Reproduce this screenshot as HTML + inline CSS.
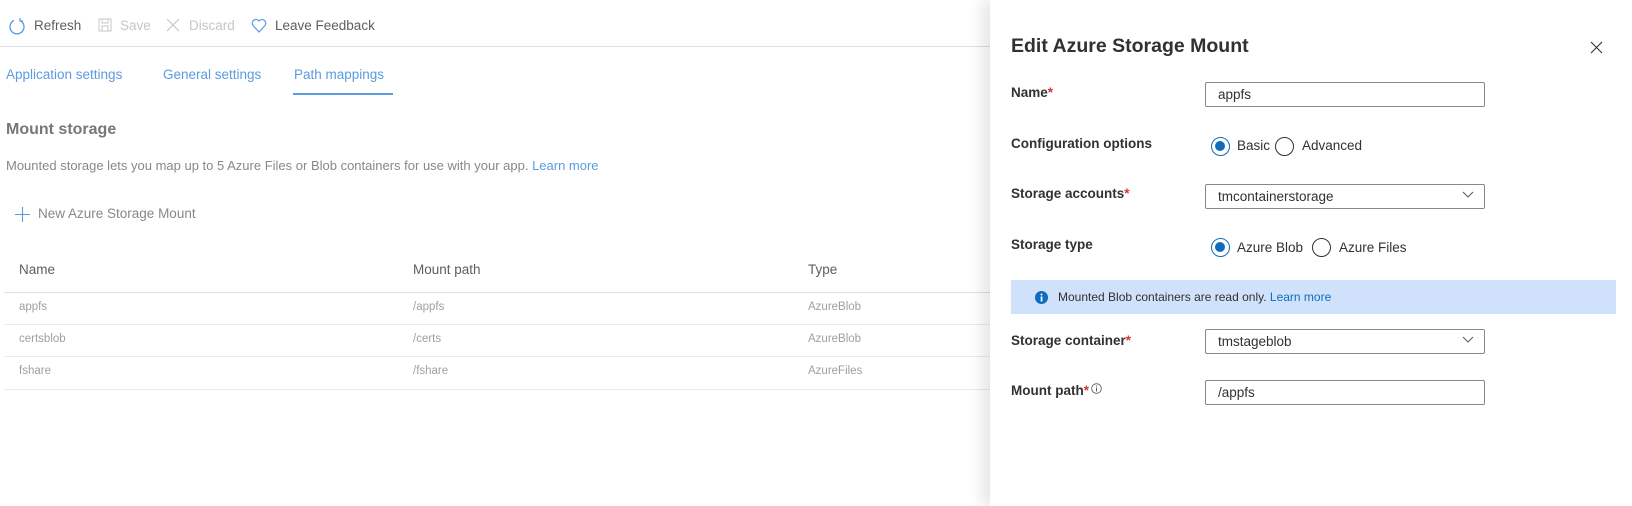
<!DOCTYPE html>
<html><head><meta charset="utf-8"><style>
*{box-sizing:border-box;margin:0;padding:0}
body{width:1632px;height:506px;overflow:hidden;background:#fff;font-family:"Liberation Sans",sans-serif;position:relative;color:#323130}
.a{position:absolute;white-space:nowrap}
.tab{font-size:13.5px;color:#5b9be0;top:67px}
.hr{position:absolute;height:1px;background:#edebe9}
.row{font-size:11.5px;color:#a19f9d}
.panel{position:absolute;left:990px;top:0;width:642px;height:506px;background:#fff;box-shadow:-8px 0 14px rgba(0,0,0,.10)}
.lbl{font-size:13.5px;font-weight:bold;color:#323130;left:21px}
.req{color:#d13438}
.inp{position:absolute;left:215px;width:280px;height:25px;border:1px solid #8a8886;border-radius:2px;font-size:13.5px;padding:4px 0 0 12px;color:#323130}
.chev{position:absolute;right:10px;top:6px}
.rad{position:absolute;width:19px;height:19px;border-radius:50%;border:1.5px solid #323130}
.rad.on{border-color:#0f6cbd}
.rad.on::after{content:"";position:absolute;left:3px;top:3px;width:10px;height:10px;border-radius:50%;background:#0f6cbd}
.rt{font-size:13.5px;color:#323130}
</style></head><body>
<svg class="a" style="left:9px;top:17px" width="16" height="18" viewBox="0 0 16 18"><path d="M5 3.5A7 7 0 1 0 11 3.5" fill="none" stroke="#5b9be0" stroke-width="1.3"/><path d="M11 1v3h3" fill="none" stroke="#5b9be0" stroke-width="1.2"/></svg>
<div class="a" style="left:34px;top:18px;font-size:13.5px;color:#605e5c">Refresh</div>
<svg class="a" style="left:98px;top:18px" width="14" height="14" viewBox="0 0 14 14"><rect x="1" y="1" width="12" height="12" fill="none" stroke="#c8c6c4"/><rect x="4" y="1" width="6" height="4" fill="none" stroke="#c8c6c4"/><rect x="4" y="8" width="6" height="5" fill="none" stroke="#c8c6c4"/></svg>
<div class="a" style="left:120px;top:18px;font-size:13.5px;color:#c8c6c4">Save</div>
<svg class="a" style="left:166px;top:18px" width="14" height="14"><path d="M1 1L13 13M13 1L1 13" stroke="#c8c6c4" stroke-width="1.2"/></svg>
<div class="a" style="left:189px;top:18px;font-size:13.5px;color:#c8c6c4">Discard</div>
<svg class="a" style="left:251px;top:18px" width="16" height="15" viewBox="0 0 16 15"><path d="M8 14L2 7.5A3.3 3.3 0 0 1 8 3a3.3 3.3 0 0 1 6 4.5Z" fill="none" stroke="#5b9be0" stroke-width="1.2"/></svg>
<div class="a" style="left:275px;top:18px;font-size:13.5px;color:#605e5c">Leave Feedback</div>
<div class="hr" style="left:0;top:46px;width:990px;background:#e1dfdd"></div>
<div class="a tab" style="left:6px">Application settings</div>
<div class="a tab" style="left:163px">General settings</div>
<div class="a tab" style="left:294px">Path mappings</div>
<div class="a" style="left:293px;top:93px;width:100px;height:2px;background:#5b9be0"></div>
<div class="a" style="left:6px;top:121px;font-size:16px;font-weight:bold;color:#797775">Mount storage</div>
<div class="a" style="left:6px;top:158px;font-size:13px;color:#8a8886">Mounted storage lets you map up to 5 Azure Files or Blob containers for use with your app. <span style="color:#5b9be0">Learn more</span></div>
<svg class="a" style="left:15px;top:207px" width="15" height="15"><path d="M7.5 0V15M0 7.5H15" stroke="#5b9be0" stroke-width="1.1"/></svg>
<div class="a" style="left:38px;top:206px;font-size:13.5px;color:#8a8886">New Azure Storage Mount</div>
<div class="a" style="left:19px;top:262px;font-size:13.5px;color:#605e5c">Name</div>
<div class="a" style="left:413px;top:262px;font-size:13.5px;color:#605e5c">Mount path</div>
<div class="a" style="left:808px;top:262px;font-size:13.5px;color:#605e5c">Type</div>
<div class="hr" style="left:4px;top:292px;width:986px;background:#e1dfdd"></div>
<div class="a row" style="left:19px;top:301px">appfs</div><div class="a row" style="left:413px;top:301px">/appfs</div><div class="a row" style="left:808px;top:301px">AzureBlob</div>
<div class="hr" style="left:4px;top:324px;width:986px"></div>
<div class="a row" style="left:19px;top:333px">certsblob</div><div class="a row" style="left:413px;top:333px">/certs</div><div class="a row" style="left:808px;top:333px">AzureBlob</div>
<div class="hr" style="left:4px;top:356px;width:986px"></div>
<div class="a row" style="left:19px;top:365px">fshare</div><div class="a row" style="left:413px;top:365px">/fshare</div><div class="a row" style="left:808px;top:365px">AzureFiles</div>
<div class="hr" style="left:4px;top:389px;width:986px"></div>
<div class="panel">
<div class="a" style="left:21px;top:35px;font-size:19.5px;font-weight:bold;color:#323130">Edit Azure Storage Mount</div>
<svg class="a" style="left:600px;top:41px" width="13" height="13"><path d="M1 1L12 12M12 1L1 12" stroke="#323130" stroke-width="1.1"/></svg>
<div class="a lbl" style="top:85px">Name<span class="req">*</span></div>
<div class="inp" style="top:82px">appfs</div>
<div class="a lbl" style="top:136px">Configuration options</div>
<div class="rad on" style="left:221px;top:137px"></div><div class="a rt" style="left:247px;top:138px">Basic</div>
<div class="rad" style="left:285px;top:137px"></div><div class="a rt" style="left:312px;top:138px">Advanced</div>
<div class="a lbl" style="top:186px">Storage accounts<span class="req">*</span></div>
<div class="inp" style="top:184px">tmcontainerstorage<svg class="chev" width="12" height="8"><path d="M1 1L6 6L11 1" fill="none" stroke="#605e5c" stroke-width="1.1"/></svg></div>
<div class="a lbl" style="top:237px">Storage type</div>
<div class="rad on" style="left:221px;top:238px"></div><div class="a rt" style="left:247px;top:240px">Azure Blob</div>
<div class="rad" style="left:322px;top:238px"></div><div class="a rt" style="left:349px;top:240px">Azure Files</div>
<div class="a" style="left:21px;top:280px;width:605px;height:34px;background:#cfe1fb"></div>
<svg class="a" style="left:45px;top:291px" width="13" height="13"><circle cx="6.5" cy="6.5" r="6.5" fill="#0f6cbd"/><rect x="5.7" y="5.5" width="1.7" height="5" fill="#fff"/><circle cx="6.5" cy="3.5" r="1" fill="#fff"/></svg>
<div class="a" style="left:68px;top:290px;font-size:12px;color:#323130">Mounted Blob containers are read only. <span style="color:#0f6cbd">Learn more</span></div>
<div class="a lbl" style="top:333px">Storage container<span class="req">*</span></div>
<div class="inp" style="top:329px">tmstageblob<svg class="chev" width="12" height="8"><path d="M1 1L6 6L11 1" fill="none" stroke="#605e5c" stroke-width="1.1"/></svg></div>
<div class="a lbl" style="top:383px">Mount path<span class="req">*</span><svg style="margin-left:2px;vertical-align:1px" width="11" height="11"><circle cx="5.5" cy="5.5" r="4.8" fill="none" stroke="#605e5c" stroke-width=".9"/><path d="M5.5 4.5V8.5" stroke="#605e5c"/><circle cx="5.5" cy="3" r=".6" fill="#605e5c"/></svg></div>
<div class="inp" style="top:380px">/appfs</div>
</div>
</body></html>
